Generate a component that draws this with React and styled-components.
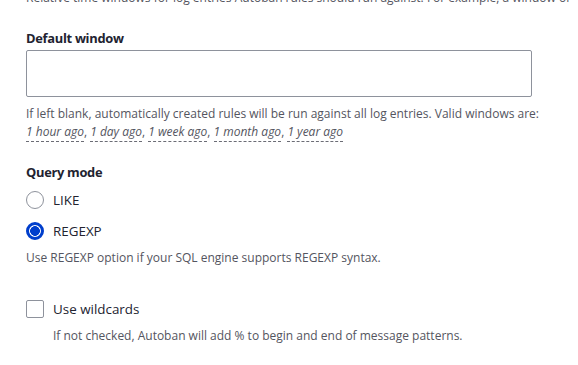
import styled, { createGlobalStyle } from "styled-components";

const GlobalStyle = createGlobalStyle`
    html, body {
        margin: 0;
        padding: 0;
        background: #fff;
    }
    body {
        font-family: "Open Sans", "Noto Sans", sans-serif;
        color: #222330;
        overflow: hidden;
    }
`;

const Styles = {
    Page: styled.div`
        width: 578px;
        height: 365px;
        overflow: hidden;
        padding: 0 0 0 26px;
        box-sizing: border-box;
    `,
    Inner: styled.div`
        margin-top: -11px;
    `,
    Description: styled.div`
        font-size: 12px;
        line-height: 18px;
        color: #545560;
        white-space: nowrap;
        padding-left: ${(p) => (p.$indent ? "27px" : "0")};
        margin-top: ${(p) => p.$top || 0}px;
    `,
    FieldLabel: styled.div`
        font-size: 12.9px;
        font-weight: 700;
        letter-spacing: -0.3px;
        line-height: 18px;
        color: #222330;
        margin-top: ${(p) => p.$top || 0}px;
    `,
    TextInput: styled.div`
        width: 506px;
        height: 47px;
        box-sizing: border-box;
        border: 1px solid #8e929c;
        border-radius: 2px;
        margin-top: 3px;
        margin-bottom: 8px;
    `,
    Abbr: styled.abbr`
        font-style: italic;
        text-decoration: none;
        border-bottom: 1px dashed #6b6c75;
        padding-bottom: 1px;
    `,
    OptionRow: styled.div`
        display: flex;
        align-items: center;
        gap: 9px;
        height: 18px;
        margin-top: ${(p) => p.$top || 0}px;
    `,
    Radio: styled.span`
        width: 18px;
        height: 18px;
        box-sizing: border-box;
        border-radius: 50%;
        border: ${(p) => (p.$checked ? "3px solid #003ecc" : "1px solid #8e929c")};
        background: ${(p) =>
            p.$checked
                ? "radial-gradient(circle, #003ecc 0 4.6px, #fff 5.1px)"
                : "#fff"};
        flex: none;
    `,
    Checkbox: styled.span`
        width: 18px;
        height: 18px;
        box-sizing: border-box;
        border: 1px solid #8e929c;
        border-radius: 2px;
        background: #fff;
        flex: none;
    `,
    OptionLabel: styled.span`
        font-size: 13.4px;
        line-height: 18px;
        color: #222330;
    `,
};

function App() {
    const { Page, Inner, Description, FieldLabel, TextInput, Abbr, OptionRow, Radio, Checkbox, OptionLabel } = Styles;
    const windows = ["1 hour ago", "1 day ago", "1 week ago", "1 month ago", "1 year ago"];

    return (
        <Page>
            <GlobalStyle />
            <Inner>
                <Description>
                    Relative time windows for log entries Autoban rules should run against. For example, a window of
                </Description>
                <FieldLabel $top={22}>Default window</FieldLabel>
                <TextInput />
                <Description>
                    If left blank, automatically created rules will be run against all log entries. Valid windows are:
                </Description>
                <Description>
                    {windows.map((w, i) => (
                        <span key={w}>
                            <Abbr title={w}>{w}</Abbr>
                            {i < windows.length - 1 ? ", " : ""}
                        </span>
                    ))}
                </Description>
                <FieldLabel $top={22}>Query mode</FieldLabel>
                <OptionRow $top={10}>
                    <Radio />
                    <OptionLabel>LIKE</OptionLabel>
                </OptionRow>
                <OptionRow $top={13}>
                    <Radio $checked />
                    <OptionLabel>REGEXP</OptionLabel>
                </OptionRow>
                <Description $top={9}>Use REGEXP option if your SQL engine supports REGEXP syntax.</Description>
                <OptionRow $top={33}>
                    <Checkbox />
                    <OptionLabel>Use wildcards</OptionLabel>
                </OptionRow>
                <Description $indent $top={9}>
                    If not checked, Autoban will add % to begin and end of message patterns.
                </Description>
            </Inner>
        </Page>
    );
}

export default App;
